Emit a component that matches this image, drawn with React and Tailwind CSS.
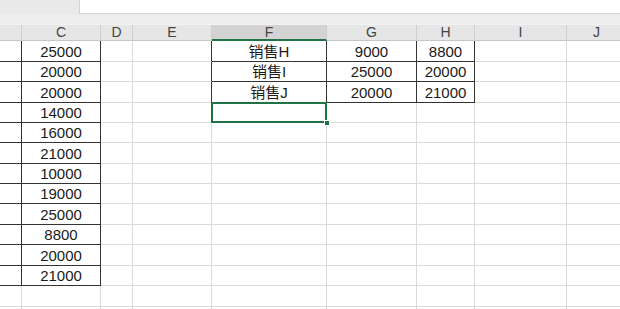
import React from "react";

// column widths: partial B, C, D, E, F, G, H, I, J
const cols = [
  { key: "B", w: "w-[22px]" },
  { key: "C", w: "w-[79px]" },
  { key: "D", w: "w-[32px]" },
  { key: "E", w: "w-[79px]" },
  { key: "F", w: "w-[115px]" },
  { key: "G", w: "w-[90px]" },
  { key: "H", w: "w-[58px]" },
  { key: "I", w: "w-[92px]" },
  { key: "J", w: "w-[60px]" },
];

const rowHeights = ["h-[21px]", "h-[20px]", "h-[21px]", "h-[20px]", "h-[20px]", "h-[21px]", "h-[20px]", "h-[20px]", "h-[21px]", "h-[20px]", "h-[21px]", "h-[20px]", "h-[21px]", "h-[20px]"];

const colC = ["25000", "20000", "20000", "14000", "16000", "21000", "10000", "19000", "25000", "8800", "20000", "21000"];
const fgh = [
  ["销售H", "9000", "8800"],
  ["销售I", "25000", "20000"],
  ["销售J", "20000", "21000"],
];

function value(r, c) {
  if (c === 1 && r < colC.length) return colC[r];
  if (c >= 4 && c <= 6 && r < fgh.length) return fgh[r][c - 4];
  return "";
}

function boxed(r, c) {
  if (r < 0 || c < 0) return false;
  if ((c === 0 || c === 1) && r < 12) return true;
  if (c >= 4 && c <= 6 && r < 3) return true;
  return false;
}

export default function App() {
  return (
    <div
      className="w-[620px] h-[309px] overflow-hidden bg-white text-[#1a1a1a]"
      style={{ fontFamily: '"Liberation Sans", "Noto Sans CJK SC", sans-serif' }}
    >
      {/* formula bar strip */}
      <div className="flex h-[14px]">
        <div className="w-[79px] bg-[#e9e9e9]" />
        <div className="flex-1 bg-white border-l border-b border-[#d4d4d4]" />
      </div>
      <div className="h-[10px] bg-[#eeeeee]" />

      {/* column headers */}
      <div className="flex h-[17px] bg-[#e6e6e6] border-t border-[#f2f2f2]">
        {cols.map((c, i) => (
          <div
            key={c.key}
            className={`${c.w} shrink-0 flex items-center justify-center text-[14px] leading-[15px] text-[#444] border-r border-[#cfcfcf] ${
              c.key === "F" ? "bg-[#d3d3d3] border-b-2 border-b-[#217346]" : "border-b border-b-[#c6c6c6]"
            }`}
          >
            {i === 0 ? "" : c.key}
          </div>
        ))}
      </div>

      {/* grid */}
      {rowHeights.map((h, r) => (
        <div key={r} className={`flex ${h}`}>
          {cols.map((c, ci) => {
            const darkR = boxed(r, ci) || boxed(r, ci + 1);
            const darkB = boxed(r, ci) || boxed(r + 1, ci);
            const selected = r === 3 && ci === 4;
            return (
              <div
                key={c.key}
                className={`${c.w} shrink-0 relative flex items-center justify-center text-[15px] leading-[17px] border-r border-b ${
                  darkR ? "border-r-[#333]" : "border-r-[#dadada]"
                } ${darkB ? "border-b-[#333]" : "border-b-[#dadada]"} ${selected ? "z-10" : ""}`}
              >
                {value(r, ci)}
                {selected && (
                  <>
                    <div className="absolute -left-px -top-px -right-px -bottom-px border-2 border-[#217346]" />
                    <div className="absolute -right-[4px] -bottom-[4px] w-[6px] h-[6px] bg-[#217346] border border-white" />
                  </>
                )}
              </div>
            );
          })}
        </div>
      ))}
    </div>
  );
}
